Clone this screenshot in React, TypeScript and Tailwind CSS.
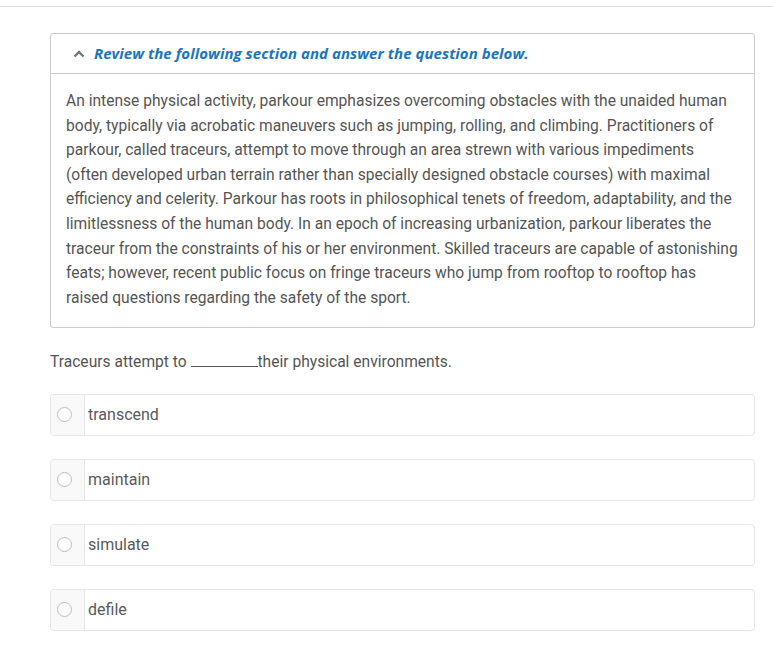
const passage = [
  "An intense physical activity, parkour emphasizes overcoming obstacles with the unaided human",
  "body, typically via acrobatic maneuvers such as jumping, rolling, and climbing. Practitioners of",
  "parkour, called traceurs, attempt to move through an area strewn with various impediments",
  "(often developed urban terrain rather than specially designed obstacle courses) with maximal",
  "efficiency and celerity. Parkour has roots in philosophical tenets of freedom, adaptability, and the",
  "limitlessness of the human body. In an epoch of increasing urbanization, parkour liberates the",
  "traceur from the constraints of his or her environment. Skilled traceurs are capable of astonishing",
  "feats; however, recent public focus on fringe traceurs who jump from rooftop to rooftop has",
  "raised questions regarding the safety of the sport.",
];

const choices = ["transcend", "maintain", "simulate", "defile"];

function Option({ label }: { label: string }) {
  return (
    <label className="flex h-[42px] cursor-pointer items-stretch rounded-[4px] border border-[#e6e6e6] bg-white">
      <span className="flex w-[34px] items-center rounded-l-[4px] border-r border-[#e6e6e6] bg-[#f9f9f9] pl-[6px]">
        <span className="block h-[15px] w-[15px] rounded-full border border-[#bdbdbd] bg-white" />
      </span>
      <span className="flex items-center pl-[3px] text-[16px] text-[#5a5a5a]">{label}</span>
    </label>
  );
}

export default function App() {
  return (
    <main className="min-h-screen bg-white font-['Roboto',sans-serif]">
      <div className="pt-[6px]">
        <div className="border-t border-[#dddddd]" />
      </div>

      <div className="ml-[50px] mr-[18px] mt-[26px]">
        <section className="rounded-[3px] border border-[#cccccc]">
          <header className="flex h-[40px] items-center gap-[9px] border-b border-[#cccccc] pl-[22px]">
            <svg width="12" height="8" viewBox="0 0 12 8" className="mt-[1px]">
              <path d="M1.5 6.5 L6 2 L10.5 6.5" fill="none" stroke="#6b7780" strokeWidth="2.4" />
            </svg>
            <h2 className="font-['Open_Sans',sans-serif] text-[15px] font-bold italic tracking-[0.05px] text-[#1b75bb]">
              Review the following section and answer the question below.
            </h2>
          </header>
          <div className="px-[15px] pb-[17px] pt-[15px] text-[15.6px] leading-[24.6px] text-[#555555]">
            {passage.map((line, i) => (
              <p key={i} className="whitespace-nowrap">
                {line}
              </p>
            ))}
          </div>
        </section>

        <p className="mt-[23px] text-[15.6px] text-[#555555]">
          Traceurs attempt to <span className="inline-block w-[67px] border-b border-[#555555] align-baseline" />their physical environments.
        </p>

        <div className="mt-[19px] flex flex-col gap-[23px]">
          {choices.map((c) => (
            <Option key={c} label={c} />
          ))}
        </div>
      </div>
    </main>
  );
}
